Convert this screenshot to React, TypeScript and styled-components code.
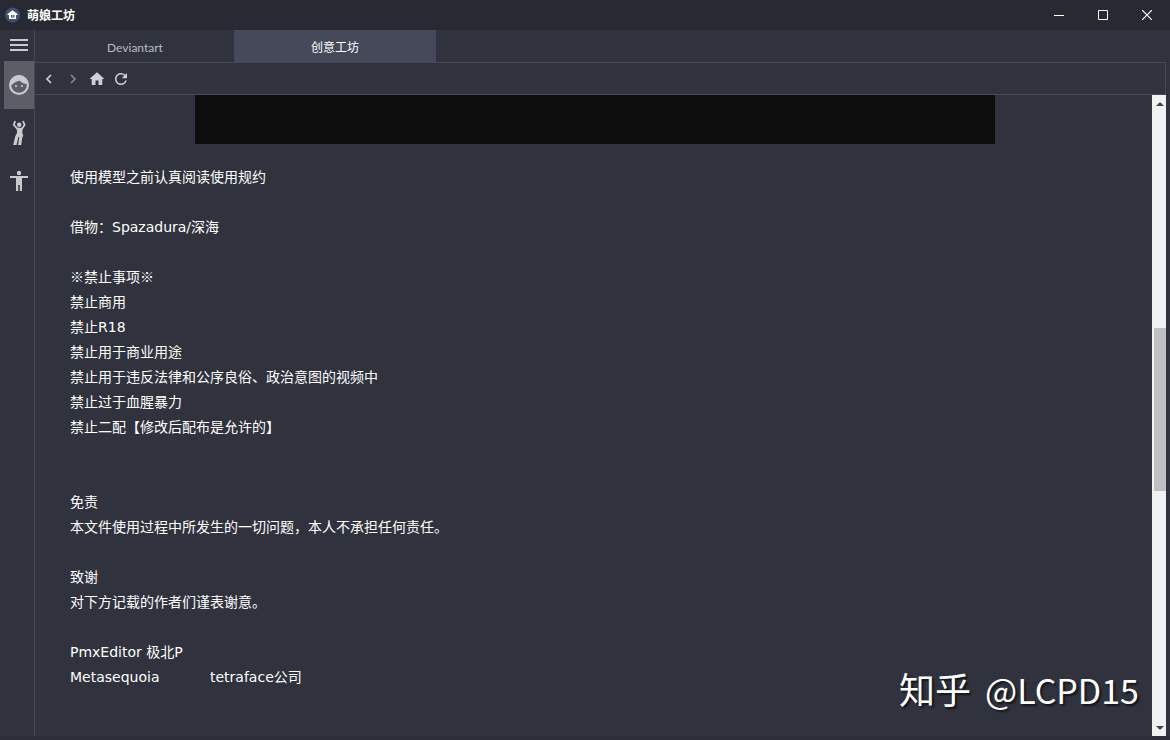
import React from 'react';
import styled, { createGlobalStyle, css } from 'styled-components';
import { MdHome, MdRefresh, MdMenu } from 'react-icons/md';

const GlobalStyle = createGlobalStyle`
  * { box-sizing: border-box; }
  body {
    margin: 0;
    background: #30333e;
    color: #ffffff;
    font-family: "Open Sans", "Noto Sans CJK SC", sans-serif;
    font-size: 12px;
  }
  button { font: inherit; color: inherit; background: none; border: 0; padding: 0; margin: 0; }
`;

const line = '#474a56';

const Window = styled.div`
  display: flex;
  flex-direction: column;
  height: 100vh;
  border-bottom: 4px solid #2c2f39;
  position: relative;
`;

const TitleBar = styled.header`
  display: flex;
  align-items: center;
  flex: none;
  height: 30px;
  padding: 0 1px 0 5px;
  background: #272a32;
`;

const AppTitle = styled.h1`
  flex: 1;
  margin: 0 0 0 7px;
  font-size: 12px;
  line-height: 18px;
  padding-top: 2px;
  font-weight: 700;
`;

const WindowButton = styled.button`
  display: grid;
  place-items: center;
  width: 44px;
  height: 30px;
`;

const Body = styled.div`
  display: flex;
  flex: 1;
  min-height: 0;
  padding: 0 4px;
`;

const Sidebar = styled.nav`
  display: flex;
  flex-direction: column;
  flex: none;
  width: 31px;
  border-right: 1px solid ${line};
  color: #c9cacf;
`;

const SideButton = styled.button<{ $active?: boolean; $short?: boolean }>`
  display: grid;
  place-items: center;
  height: 48px;
  ${p => p.$short && css`
    height: 31px;
    padding-bottom: 2px;
  `}
  ${p => p.$active && css`background: #5b5d67;`}
`;

const Main = styled.div`
  display: flex;
  flex-direction: column;
  flex: 1;
  min-width: 0;
`;

const Tabs = styled.div`
  display: flex;
  flex: none;
  height: 33px;
  border-bottom: 1px solid ${line};
`;

const Tab = styled.button<{ $active?: boolean }>`
  width: 200px;
  height: 33px;
  line-height: 16px;
  padding-top: 2px;
  font-family: Lato, "Noto Sans CJK SC", sans-serif;
  color: #b9bbc2;
  ${p => p.$active && css`
    width: 202px;
    margin: 0 -1px;
    color: #ffffff;
    background: #464959;
  `}
`;

const Toolbar = styled.div`
  display: flex;
  flex: none;
  align-items: center;
  height: 32px;
  padding-left: 2px;
  border-right: 1px solid ${line};
  border-bottom: 1px solid ${line};
`;

const ToolButton = styled.button<{ $dim?: boolean }>`
  display: grid;
  place-items: center;
  width: 24px;
  height: 24px;
  color: ${p => (p.$dim ? '#85878f' : '#cfd0d5')};
`;

const Viewport = styled.div`
  display: flex;
  flex: 1;
  min-height: 0;
`;

const Article = styled.main`
  flex: 1;
  min-width: 0;
  overflow: hidden;
  padding: 0 32px 0 35px;
`;

const Media = styled.div`
  max-width: 800px;
  height: 49px;
  margin: 0 auto 21px;
  background: #0e0e0e;
`;

const Line = styled.p`
  margin: 0;
  min-height: 25px;
  font-family: "DejaVu Sans", "Noto Sans CJK SC", sans-serif;
  font-size: 14px;
  line-height: 25px;
  white-space: pre-wrap;
`;

const Credit = styled.span`
  display: inline-block;
  width: 140px;
`;

const CjkMark = styled.span`
  font-family: "Noto Sans CJK SC", sans-serif;
  line-height: 1;
`;

const Scrollbar = styled.div`
  display: flex;
  flex-direction: column;
  align-items: stretch;
  flex: none;
  width: 14px;
  background: #f0f1f1;
`;

const ScrollButton = styled.button`
  display: grid;
  place-items: center;
  height: 17px;
  padding-left: 2px;
`;

const ThumbSpace = styled.div<{ $grow: number }>`
  flex: ${p => p.$grow} 1 0;
`;

const Thumb = styled.div`
  flex: 163 1 0;
  margin-left: 2px;
  background: #c0c0c0;
`;

const Watermark = styled.div`
  position: absolute;
  right: 31px;
  bottom: 20px;
  display: flex;
  align-items: baseline;
  gap: 14px;
  font-family: "Noto Sans CJK SC", sans-serif;
  font-size: 36px;
  line-height: 52px;
  text-shadow: 2px 2px 2px rgba(0, 0, 0, 0.6);
`;

const Handle = styled.span`
  font-size: 34px;
`;

const lines: React.ReactNode[] = [
  '使用模型之前认真阅读使用规约',
  '',
  '借物：Spazadura/深海',
  '',
  <><CjkMark>※</CjkMark>禁止事项<CjkMark>※</CjkMark></>,
  '禁止商用',
  '禁止R18',
  '禁止用于商业用途',
  '禁止用于违反法律和公序良俗、政治意图的视频中',
  '禁止过于血腥暴力',
  '禁止二配【修改后配布是允许的】',
  '',
  '',
  '免责',
  '本文件使用过程中所发生的一切问题，本人不承担任何责任。',
  '',
  '致谢',
  '对下方记载的作者们谨表谢意。',
  '',
  'PmxEditor 极北P',
  <><Credit>Metasequoia</Credit>tetraface公司</>,
];

const Logo = () => (
  <svg width="15" height="16" viewBox="0 0 15 16" aria-hidden="true">
    <circle cx="7.5" cy="8" r="7.5" fill="#41506f" />
    <path d="M7.5 3.2 12.5 7v1H11v4H4V8H2.500V7z" fill="#fff" />
    <path d="M6 8h3.500v2.500H6z" fill="#41506f" />
    <path d="M7 8.500h1.500v1H7z" fill="#fff" />
  </svg>
);

const Face = () => (
  <svg width="24" height="24" viewBox="0 0 24 24" fill="currentColor" aria-hidden="true">
    <circle cx="12" cy="12" r="8.900" fill="none" stroke="currentColor" strokeWidth="2.200" />
    <path d="M3 11.500A9 9 0 0 1 21 11c-3 .3-6-.7-8-3.200C10.500 8 8.800 8.600 7.400 9.800 6.500 10.800 5 12 3 12.500z" />
    <circle cx="9" cy="13" r="1.100" />
    <circle cx="15" cy="13" r="1.100" />
  </svg>
);

const Dancer = () => (
  <svg width="16" height="26" viewBox="0 0 16 26" fill="none" stroke="currentColor" aria-hidden="true">
    <circle cx="8.200" cy="4.800" r="2.300" fill="currentColor" stroke="none" />
    <path d="M4.200 1 2.800 4.800 6.500 9M12 1l1.600 4L10.800 9" strokeWidth="1.800" />
    <path d="M5.500 7.800h6.500l-.8 4.400 1 3.300-1 2.500-.9 7H7l1.300-7.500-.8-.8L5.500 25H2.200l2-8.500 2-4z" fill="currentColor" stroke="none" />
  </svg>
);

const Person = () => (
  <svg width="20" height="22" viewBox="0 0 20 22" fill="currentColor" aria-hidden="true">
    <circle cx="10" cy="3" r="2.200" />
    <path d="M1 6h18v2h-6v13h-2.200v-6H9.200v6H7V8H1z" />
  </svg>
);

const Chevron = ({ back }: { back?: boolean }) => (
  <svg width="8" height="10" viewBox="0 0 8 10" fill="none" stroke="currentColor" strokeWidth="1.700" aria-hidden="true">
    <path d={back ? 'M6 1 2 5l4 4' : 'M2 1l4 4-4 4'} />
  </svg>
);

const Arrow = ({ up }: { up?: boolean }) => (
  <svg width="8" height="4" viewBox="0 0 8 4" fill="#444" aria-hidden="true">
    <path d={up ? 'M4 0 8 4H0z' : 'M0 0h8L4 4z'} />
  </svg>
);

export default function App() {
  return (
    <>
      <GlobalStyle />
      <Window>
        <TitleBar>
          <Logo />
          <AppTitle>萌娘工坊</AppTitle>
          <WindowButton aria-label="最小化">
            <svg width="10" height="10" stroke="#fff"><path d="M0 5.500h10" /></svg>
          </WindowButton>
          <WindowButton aria-label="最大化">
            <svg width="10" height="10" stroke="#fff" fill="none"><path d="M.5.5h9v9h-9z" /></svg>
          </WindowButton>
          <WindowButton aria-label="关闭">
            <svg width="10" height="10" stroke="#fff" strokeWidth="1.200"><path d="M0 0l10 10M10 0 0 10" /></svg>
          </WindowButton>
        </TitleBar>
        <Body>
          <Sidebar>
            <SideButton $short aria-label="菜单"><MdMenu size={24} /></SideButton>
            <SideButton $active aria-label="模型"><Face /></SideButton>
            <SideButton aria-label="动作"><Dancer /></SideButton>
            <SideButton aria-label="姿势"><Person /></SideButton>
          </Sidebar>
          <Main>
            <Tabs role="tablist">
              <Tab role="tab">Deviantart</Tab>
              <Tab role="tab" aria-selected $active>创意工坊</Tab>
            </Tabs>
            <Toolbar>
              <ToolButton aria-label="后退"><Chevron back /></ToolButton>
              <ToolButton aria-label="前进" $dim><Chevron /></ToolButton>
              <ToolButton aria-label="主页"><MdHome size={18} /></ToolButton>
              <ToolButton aria-label="刷新"><MdRefresh size={18} /></ToolButton>
            </Toolbar>
            <Viewport>
              <Article>
                <Media />
                {lines.map((text, i) => <Line key={i}>{text}</Line>)}
              </Article>
              <Scrollbar>
                <ScrollButton aria-label="向上滚动"><Arrow up /></ScrollButton>
                <ThumbSpace $grow={216} />
                <Thumb />
                <ThumbSpace $grow={228} />
                <ScrollButton aria-label="向下滚动"><Arrow /></ScrollButton>
              </Scrollbar>
            </Viewport>
          </Main>
        </Body>
        <Watermark><span>知乎</span><Handle>@LCPD15</Handle></Watermark>
      </Window>
    </>
  );
}
